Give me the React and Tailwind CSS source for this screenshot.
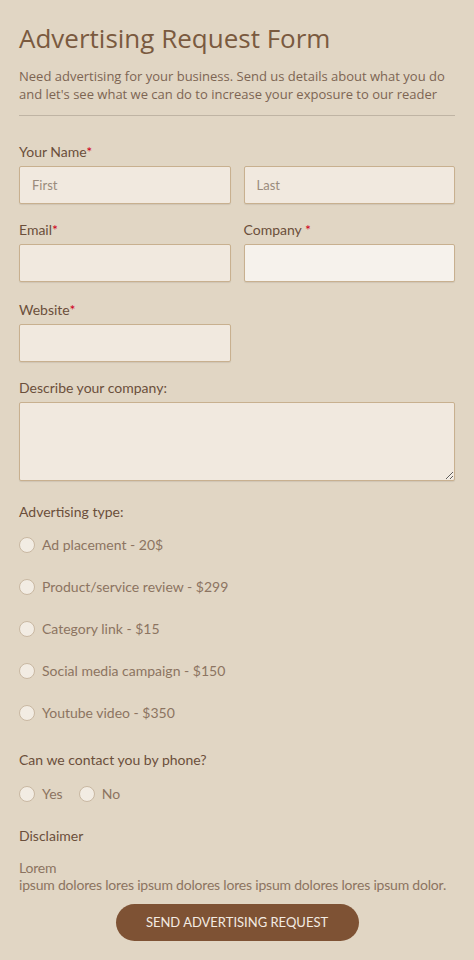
import React from 'react';

const body = { fontFamily: 'Lato, "Open Sans", sans-serif' };

const Req = () => <span className="text-[#d0021b]">*</span>;

const Label = ({ children }) => (
  <div className="text-[14px] leading-[18px] text-[#6b4f3b] mb-[5px]" style={body}>
    {children}
  </div>
);

const Input = ({ placeholder, className = 'bg-[#f1e9df]' }) => (
  <input
    placeholder={placeholder}
    className={`h-[38px] w-full rounded-[2px] border border-[#c8b08f] px-3 text-[13px] text-[#6f5240] placeholder:text-[#9a8b7c] outline-none shadow-[0_1px_1px_rgba(0,0,0,0.08)] ${className}`}
    style={body}
  />
);

const Radio = ({ label }) => (
  <label className="flex items-center gap-[7px] text-[14px] leading-[20px] text-[#8c7461]" style={body}>
    <span className="h-[16px] w-[16px] rounded-full border border-[#c9b8a2] bg-[#f2ece3]" />
    {label}
  </label>
);

const types = [
  'Ad placement - 20$',
  'Product/service review - $299',
  'Category link - $15',
  'Social media campaign - $150',
  'Youtube video - $350',
];

export default function App() {
  return (
    <div className="min-h-[960px] w-full bg-[#e1d6c4] px-[19px] pt-[20px] pb-[20px]">
      <h1
        className="text-[26px] leading-[36px] text-[#7a5a3f]"
        style={{ fontFamily: '"Open Sans", sans-serif' }}
      >
        Advertising Request Form
      </h1>
      <p
        className="mt-[11px] text-[13px] leading-[18px] text-[#7d6553]"
        style={{ fontFamily: '"Open Sans", sans-serif' }}
      >
        Need advertising for your business. Send us details about what you do and let's see what we can do to increase your exposure to our reader
      </p>
      <div className="mt-[12px] h-px bg-[#bfb4a4]" />

      <div className="mt-[27px]">
        <Label>Your Name<Req /></Label>
        <div className="grid grid-cols-2 gap-[13px]">
          <Input placeholder="First" />
          <Input placeholder="Last" />
        </div>
      </div>

      <div className="mt-[17px] grid grid-cols-2 gap-[13px]">
        <div>
          <Label>Email<Req /></Label>
          <Input />
        </div>
        <div>
          <Label>Company <Req /></Label>
          <Input className="bg-[#f6f2ec]" />
        </div>
      </div>

      <div className="mt-[19px] grid grid-cols-2 gap-[13px]">
        <div>
          <Label>Website<Req /></Label>
          <Input />
        </div>
      </div>

      <div className="mt-[17px]">
        <Label>Describe your company:</Label>
        <textarea
          className="block h-[79px] w-full rounded-[2px] border border-[#c8b08f] bg-[#f1e9df] px-3 py-2 text-[13px] outline-none shadow-[0_1px_1px_rgba(0,0,0,0.08)]"
          style={body}
        />
      </div>

      <div className="mt-[22px]">
        <Label>Advertising type:</Label>
        <div className="mt-[14px] flex flex-col gap-[22px]">
          {types.map((t) => (
            <Radio key={t} label={t} />
          ))}
        </div>
      </div>

      <div className="mt-[28px]">
        <Label>Can we contact you by phone?</Label>
        <div className="mt-[15px] flex items-center gap-[16px]">
          <Radio label="Yes" />
          <Radio label="No" />
        </div>
      </div>

      <div className="mt-[23px]">
        <Label>Disclaimer</Label>
        <div className="mt-[14px] text-[14px] leading-[17px] tracking-[-0.2px] text-[#8c7461]" style={body}>
          Lorem
          <br />
          ipsum dolores lores ipsum dolores lores ipsum dolores lores ipsum dolor.
        </div>
      </div>

      <div className="mt-[11px] flex justify-center">
        <button
          className="h-[37px] w-[243px] rounded-full bg-[#7e5234] text-[13px] text-[#f3ebe2]"
          style={body}
        >
          SEND ADVERTISING REQUEST
        </button>
      </div>
    </div>
  );
}
